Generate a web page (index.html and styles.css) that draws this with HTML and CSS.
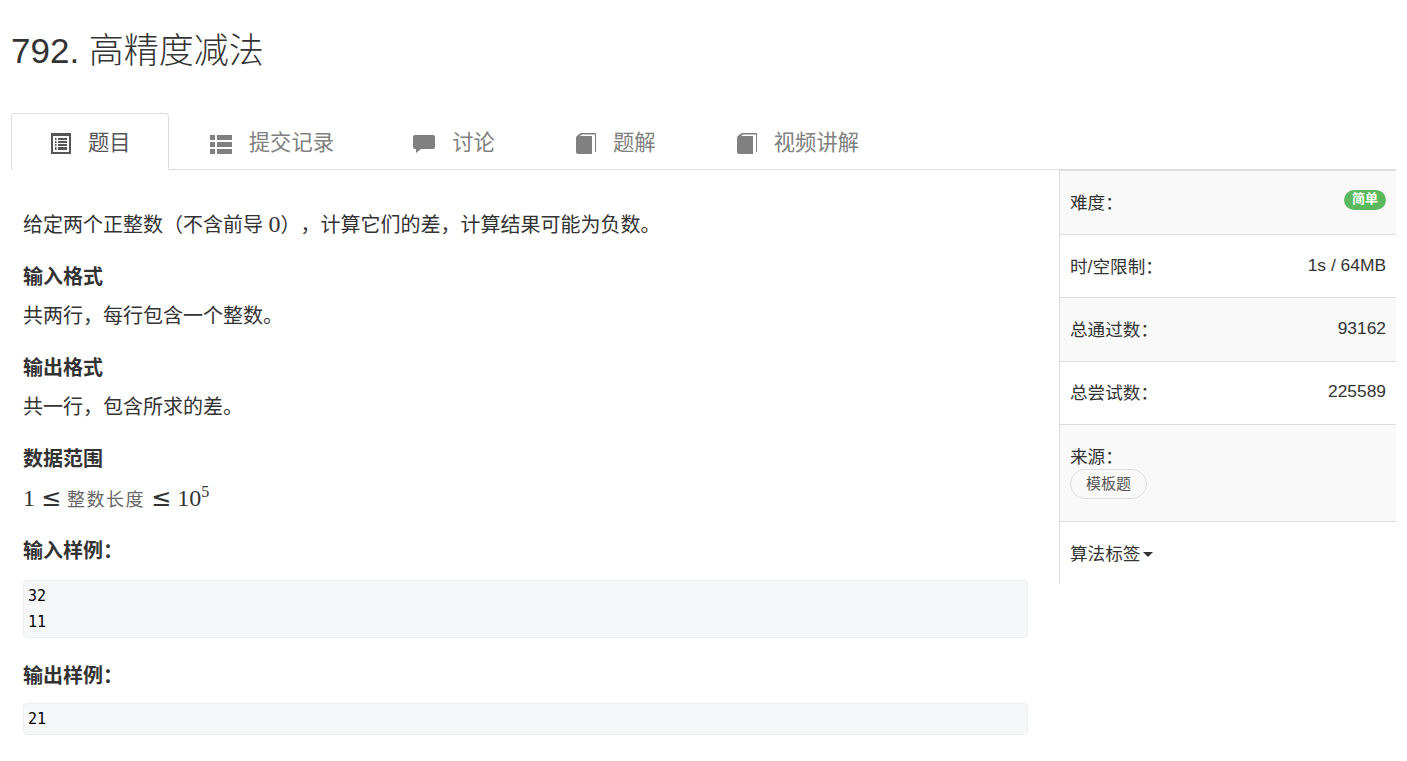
FILE: index.html
```html
<!DOCTYPE html>
<html lang="en">
<head>
    <meta charset="UTF-8">
    <meta name="viewport" content="width=device-width, initial-scale=1.0">
    <title>792. 高精度减法</title>
    <link rel="stylesheet" href="styles.css">
</head>
<body>
    <div class="container">
        <h1 class="problem-title">792. 高精度减法</h1>

        <ul class="tabs">
            <li class="tab active">
                <svg class="tab-icon narrow" viewBox="1 0 20 22"><path fill-rule="evenodd" d="M1 0H21V21H1ZM3 3V19H19V3ZM5 5H6.500V7H5ZM8 5H17V7H8ZM5 8H6.500V10H5ZM8 8H17V10H8ZM5 11H6.500V13H5ZM8 11H17V13H8ZM5 14H6.500V17H5ZM8 14H17V17H8Z"/></svg>
                <span>题目</span>
            </li>
            <li class="tab">
                <svg class="tab-icon" viewBox="0 0 22 22"><path d="M0 2H5V7H0ZM7 2H22V7H7ZM0 9H5V14H0ZM7 9H22V14H7ZM0 16H5V21H0ZM7 16H22V21H7Z"/></svg>
                <span>提交记录</span>
            </li>
            <li class="tab">
                <svg class="tab-icon" viewBox="0 0 22 22"><path d="M2 2H20Q22 2 22 4V14Q22 16 20 16H8L3 20V16H2Q0 16 0 14V4Q0 2 2 2Z"/></svg>
                <span>讨论</span>
            </li>
            <li class="tab">
                <svg class="tab-icon" viewBox="0 0 22 22"><path d="M7 0H22V19H21V1.500H8L6 3H18V21H4Q2 21 2 19V5Q2 3 4 2Z"/></svg>
                <span>题解</span>
            </li>
            <li class="tab">
                <svg class="tab-icon" viewBox="0 0 22 22"><path d="M7 0H22V19H21V1.500H8L6 3H18V21H4Q2 21 2 19V5Q2 3 4 2Z"/></svg>
                <span>视频讲解</span>
            </li>
        </ul>

        <div class="content">
            <div class="statement">
                <p>给定两个正整数（不含前导 <span class="math">0</span>），计算它们的差，计算结果可能为负数。</p>

                <h4>输入格式</h4>
                <p>共两行，每行包含一个整数。</p>

                <h4>输出格式</h4>
                <p>共一行，包含所求的差。</p>

                <h4>数据范围</h4>
                <p class="math-line"><span class="math">1<span class="rel">≤</span><span class="math-text">整数长度</span><span class="rel">≤</span>10<sup>5</sup></span></p>

                <h4>输入样例：</h4>
                <pre>32
11</pre>

                <h4>输出样例：</h4>
                <pre>21</pre>
            </div>

            <div class="sidebar">
                <div class="info-row">
                    <span>难度：</span>
                    <span class="badge">简单</span>
                </div>
                <div class="info-row">
                    <span>时/空限制：</span>
                    <span class="value">1s / 64MB</span>
                </div>
                <div class="info-row">
                    <span>总通过数：</span>
                    <span class="value">93162</span>
                </div>
                <div class="info-row">
                    <span>总尝试数：</span>
                    <span class="value">225589</span>
                </div>
                <div class="info-row source">
                    <span>来源：</span>
                    <span class="tag">模板题</span>
                </div>
                <div class="info-row">
                    <span>算法标签<i class="caret"></i></span>
                </div>
            </div>
        </div>
    </div>
</body>
</html>
```

FILE: styles.css
```css
body {
    font-family: "Liberation Sans", "Noto Sans CJK SC", sans-serif;
    margin: 0;
    padding: 0;
    background-color: #fff;
    color: #333;
    text-spacing-trim: space-all;
}

.container {
    padding: 0 11px;
}

.problem-title {
    margin: 0;
    padding-top: 26px;
    height: 113px;
    box-sizing: border-box;
    font-size: 35px;
    line-height: 50px;
    font-weight: 300;
}

.tabs {
    display: flex;
    list-style: none;
    margin: 0;
    padding: 0;
    border-bottom: 1px solid #ddd;
}

.tab {
    display: flex;
    align-items: center;
    gap: 17px;
    height: 53px;
    padding: 0 37.200px 2px 39px;
    margin: 0 1px -1px 0;
    border: 1px solid transparent;
    border-radius: 4px 4px 0 0;
    font-size: 21.300px;
    color: #808080;
}

.tab.active {
    color: #555;
    background: #fff;
    border-color: #ddd;
    border-bottom-color: #fff;
}

.tab-icon {
    width: 22px;
    height: 22px;
    margin-top: 6px;
    fill: #808080;
    flex-shrink: 0;
}

.tab-icon.narrow {
    width: 20px;
}

.tab.active .tab-icon {
    fill: #555;
}

.content {
    display: flex;
    align-items: flex-start;
}

.statement {
    flex: 1;
    min-width: 0;
    padding: 39px 31px 0 12px;
    font-size: 20px;
}

.statement p {
    margin: 0 0 23px;
    line-height: 30px;
}

.statement h4 {
    margin: 0 0 10px;
    font-size: 20px;
    line-height: 28px;
    font-weight: 700;
}

.math {
    font-family: "Liberation Serif", serif;
    font-size: 24px;
}

.rel {
    margin: 0 6px;
    font-family: "DejaVu Sans", sans-serif;
    font-size: 24px;
}

.math-text {
    font-family: "Noto Sans CJK SC", sans-serif;
    font-size: 18px;
    letter-spacing: 1.500px;
    color: #666;
}

.math sup {
    font-size: 16px;
    line-height: 0;
}

.statement pre {
    margin: 15px 0 23.500px;
    padding: 2px 4px;
    border: 1px solid #eee;
    border-radius: 4px;
    background: #f6f7f9;
    color: #000;
    font-family: "DejaVu Sans Mono", monospace;
    font-size: 15px;
    line-height: 26px;
}

.statement pre:last-child {
    margin-top: 13.500px;
}

.sidebar {
    width: 336px;
    flex-shrink: 0;
    border-left: 1px solid #ddd;
    border-top: 1px solid #ddd;
    font-size: 17.600px;
}

.info-row {
    display: flex;
    justify-content: space-between;
    align-items: center;
    height: 60.330px;
    padding: 0 10px 2px;
    border-bottom: 1px solid #ddd;
}

.info-row:nth-child(odd) {
    background: #f9f9f9;
}

.info-row:first-child {
    height: 61px;
}

.info-row:last-child {
    border-bottom: 0;
}

.value {
    font-size: 17.400px;
}

.source {
    display: block;
    height: 97px;
    padding-top: 20px;
    box-sizing: border-box;
    line-height: 24px;
}

.source span {
    display: block;
}

.badge {
    margin-top: -3px;
    padding: 0 8px;
    height: 20px;
    border-radius: 10px;
    background: #5cb85c;
    color: #fff;
    font-size: 13px;
    font-weight: 700;
    line-height: 18px;
}

.source .tag {
    display: inline-block;
    padding: 0 15px;
    border: 1px solid #ddd;
    border-radius: 15px;
    font-size: 15px;
    line-height: 28px;
    color: #555;
}

.caret {
    display: inline-block;
    margin-left: 3px;
    vertical-align: middle;
    border-top: 5px solid #333;
    border-left: 5px solid transparent;
    border-right: 5px solid transparent;
}
```
